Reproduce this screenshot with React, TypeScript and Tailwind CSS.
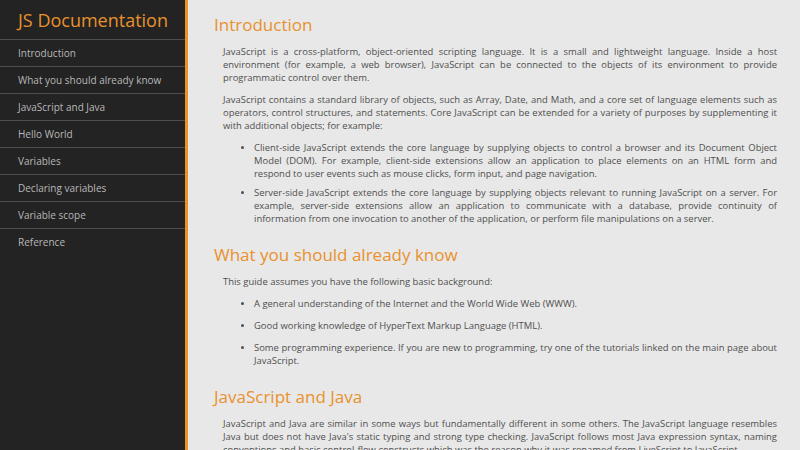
import React from "react";

const navItems = [
  "Introduction",
  "What you should already know",
  "JavaScript and Java",
  "Hello World",
  "Variables",
  "Declaring variables",
  "Variable scope",
  "Reference",
];

function H({ children, first }: { children: React.ReactNode; first?: boolean }) {
  return (
    <h2
      className={`text-[17px] font-normal leading-[23px] text-[#e8912d] ${first ? "mt-0" : "mt-[18px]"} mb-[9px]`}
    >
      {children}
    </h2>
  );
}

function P({ children }: { children: React.ReactNode }) {
  return <p className="ml-[9px] mb-[9px] text-justify">{children}</p>;
}

function UL({ items, tight }: { items: string[]; tight?: boolean }) {
  return (
    <ul
      className={`ml-[9px] pl-[31px] list-disc flex flex-col ${tight ? "gap-[6px]" : "gap-[9px]"} mb-[9px]`}
    >
      {items.map((t) => (
        <li key={t} className="text-justify marker:text-[8px]">
          {t}
        </li>
      ))}
    </ul>
  );
}

export default function App() {
  return (
    <div
      className="flex h-screen w-full overflow-hidden bg-[#e8e8e8]"
      style={{ fontFamily: '"Open Sans", "Noto Sans", sans-serif' }}
    >
      <nav className="w-[188px] shrink-0 bg-[#232323] border-r-[3px] border-[#e8912d] flex flex-col">
        <div className="h-[39px] flex items-center pl-[18px] text-[18px] text-[#e8912d] leading-none">
          JS Documentation
        </div>
        {navItems.map((n) => (
          <div
            key={n}
            className="h-[27px] border-t border-[#4e4e4e] flex items-center pl-[18px] text-[10px] text-[#b8b8b8]"
          >
            {n}
          </div>
        ))}
      </nav>
      <main className="flex-1 overflow-hidden pl-[26px] pr-[23px] pt-[13px] text-[9.45px] leading-[13px] text-[#4f4f4f]">
        <H first>Introduction</H>
        <P>
          JavaScript is a cross-platform, object-oriented scripting language. It is a small and lightweight language. Inside a host
          environment (for example, a web browser), JavaScript can be connected to the objects of its environment to provide
          programmatic control over them.
        </P>
        <P>
          JavaScript contains a standard library of objects, such as Array, Date, and Math, and a core set of language elements such as
          operators, control structures, and statements. Core JavaScript can be extended for a variety of purposes by supplementing it
          with additional objects; for example:
        </P>
        <UL
          tight
          items={[
            "Client-side JavaScript extends the core language by supplying objects to control a browser and its Document Object Model (DOM). For example, client-side extensions allow an application to place elements on an HTML form and respond to user events such as mouse clicks, form input, and page navigation.",
            "Server-side JavaScript extends the core language by supplying objects relevant to running JavaScript on a server. For example, server-side extensions allow an application to communicate with a database, provide continuity of information from one invocation to another of the application, or perform file manipulations on a server.",
          ]}
        />
        <H>What you should already know</H>
        <P>This guide assumes you have the following basic background:</P>
        <UL
          items={[
            "A general understanding of the Internet and the World Wide Web (WWW).",
            "Good working knowledge of HyperText Markup Language (HTML).",
            "Some programming experience. If you are new to programming, try one of the tutorials linked on the main page about JavaScript.",
          ]}
        />
        <H>JavaScript and Java</H>
        <P>
          JavaScript and Java are similar in some ways but fundamentally different in some others. The JavaScript language resembles
          Java but does not have Java's static typing and strong type checking. JavaScript follows most Java expression syntax, naming
          conventions and basic control-flow constructs which was the reason why it was renamed from LiveScript to JavaScript.
        </P>
      </main>
    </div>
  );
}
